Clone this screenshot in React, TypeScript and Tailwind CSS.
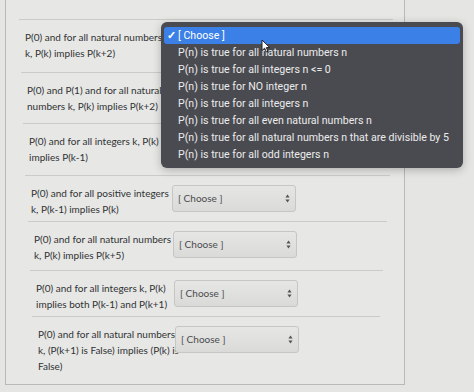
import React from 'react';

type Row = {
  lines: string[];
  wrap: string;
  text: string;
};

// each row is a bordered strip; offsets follow the slight tilt of the panel
const rows: Row[] = [
  {
    lines: ['P(0) and for all natural numbers', 'k, P(k) implies P(k+2)'],
    wrap: 'ml-[13px] mr-[11px] h-[53px]',
    text: 'w-[147px]',
  },
  {
    lines: ['P(0) and P(1) and for all natural', 'numbers k, P(k) implies P(k+2)'],
    wrap: 'ml-[15px] mr-[12px] h-[51px]',
    text: 'w-[146px]',
  },
  {
    lines: ['P(0) and for all integers k, P(k)', 'implies P(k-1)'],
    wrap: 'ml-[17px] mr-[13px] h-[52px]',
    text: 'w-[143px]',
  },
  {
    lines: ['P(0) and for all positive integers', 'k, P(k-1) implies P(k)'],
    wrap: 'ml-[19px] mr-[14px] h-[46px]',
    text: 'w-[141px]',
  },
  {
    lines: ['P(0) and for all natural numbers', 'k, P(k) implies P(k+5)'],
    wrap: 'ml-[22px] mr-[17px] h-[49px]',
    text: 'w-[139px]',
  },
  {
    lines: ['P(0) and for all integers k, P(k)', 'implies both P(k-1) and P(k+1)'],
    wrap: 'ml-[24px] mr-[21px] h-[46px]',
    text: 'w-[138px]',
  },
  {
    lines: ['P(0) and for all natural numbers', 'k, (P(k+1) is False) implies (P(k) is', 'False)'],
    wrap: 'ml-[26px] mr-[24px] h-[68px]',
    text: 'w-[137px]',
  },
];

const options = [
  'P(n) is true for all natural numbers n',
  'P(n) is true for all integers n <= 0',
  'P(n) is true for NO integer n',
  'P(n) is true for all integers n',
  'P(n) is true for all even natural numbers n',
  'P(n) is true for all natural numbers n that are divisible by 5',
  'P(n) is true for all odd integers n',
];

function SelectBox() {
  return (
    <div className="flex h-[27px] w-[124px] shrink-0 items-center justify-between rounded-[3px] border border-[#c6c6c4] bg-gradient-to-b from-[#e6e6e4] to-[#dadad8] pl-[5px] pr-[5px] text-[10px] text-[#4a4c4e]">
      <span>[ Choose ]</span>
      <svg width="5" height="9" viewBox="0 0 5 9">
        <path d="M2.5 0.5 L4.6 3.5 L0.4 3.5 Z" fill="#555" />
        <path d="M2.5 8.5 L4.6 5.5 L0.4 5.5 Z" fill="#555" />
      </svg>
    </div>
  );
}

export default function App() {
  return (
    <div className="relative h-[392px] w-[474px] overflow-hidden bg-[#e5e5e3] font-['Lato',sans-serif]">
      <div className="ml-[5px] h-[385px] w-[400px] border-x border-b border-[#b9b9b7] bg-[#e7e7e5] pt-[19px]">
        {rows.map((r, i) => (
          <div key={i} className={`flex items-start border-t border-[#cbcbc9] pl-[6px] pt-[9px] ${r.wrap}`}>
            <div className={`shrink-0 whitespace-nowrap text-[10px] leading-[16px] text-[#2f3234] ${r.text}`}>
              {r.lines.map((l, j) => (
                <div key={j}>{l}</div>
              ))}
            </div>
            <SelectBox />
          </div>
        ))}
      </div>

      {/* open native menu */}
      <div className="absolute left-[161px] top-[22px] w-[302px] rounded-[6px] bg-[#4a4b51] px-[3px] py-[5px] font-['Roboto',sans-serif] text-[10.6px] leading-[17px] text-[#ececec] shadow-[0_2px_8px_rgba(0,0,0,0.25)]">
        <div className="flex h-[17px] items-center rounded-[3px] bg-[#3a80e6] text-white">
          <span className="w-[14px] pl-[3px] text-[11px] font-bold">✓</span>
          <span>[ Choose ]</span>
        </div>
        {options.map((o) => (
          <div key={o} className="h-[17px] whitespace-nowrap pl-[14px]">
            {o}
          </div>
        ))}
      </div>

      <svg className="absolute left-[261px] top-[39px]" width="10" height="14" viewBox="0 0 10 14">
        <path d="M1 1 L1 11.5 L3.6 9.2 L5.4 13 L7 12.3 L5.3 8.6 L8.8 8.6 Z" fill="#fff" stroke="#222" strokeWidth="1" />
      </svg>
    </div>
  );
}
